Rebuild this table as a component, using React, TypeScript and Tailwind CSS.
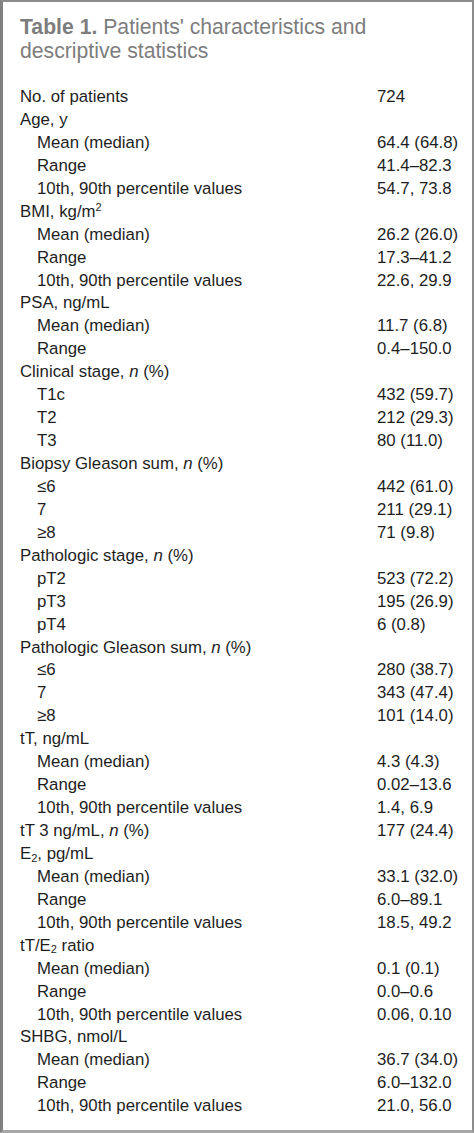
import React from 'react';

type Row = { label: React.ReactNode; value?: string; sub?: boolean };

const n = <i>n</i>;

const rows: Row[] = [
  { label: 'No. of patients', value: '724' },
  { label: 'Age, y' },
  { label: 'Mean (median)', value: '64.4 (64.8)', sub: true },
  { label: 'Range', value: '41.4–82.3', sub: true },
  { label: '10th, 90th percentile values', value: '54.7, 73.8', sub: true },
  { label: <>BMI, kg/m<sup className="text-[11px]">2</sup></> },
  { label: 'Mean (median)', value: '26.2 (26.0)', sub: true },
  { label: 'Range', value: '17.3–41.2', sub: true },
  { label: '10th, 90th percentile values', value: '22.6, 29.9', sub: true },
  { label: 'PSA, ng/mL' },
  { label: 'Mean (median)', value: '11.7 (6.8)', sub: true },
  { label: 'Range', value: '0.4–150.0', sub: true },
  { label: <>Clinical stage, {n} (%)</> },
  { label: 'T1c', value: '432 (59.7)', sub: true },
  { label: 'T2', value: '212 (29.3)', sub: true },
  { label: 'T3', value: '80 (11.0)', sub: true },
  { label: <>Biopsy Gleason sum, {n} (%)</> },
  { label: '≤6', value: '442 (61.0)', sub: true },
  { label: '7', value: '211 (29.1)', sub: true },
  { label: '≥8', value: '71 (9.8)', sub: true },
  { label: <>Pathologic stage, {n} (%)</> },
  { label: 'pT2', value: '523 (72.2)', sub: true },
  { label: 'pT3', value: '195 (26.9)', sub: true },
  { label: 'pT4', value: '6 (0.8)', sub: true },
  { label: <>Pathologic Gleason sum, {n} (%)</> },
  { label: '≤6', value: '280 (38.7)', sub: true },
  { label: '7', value: '343 (47.4)', sub: true },
  { label: '≥8', value: '101 (14.0)', sub: true },
  { label: 'tT, ng/mL' },
  { label: 'Mean (median)', value: '4.3 (4.3)', sub: true },
  { label: 'Range', value: '0.02–13.6', sub: true },
  { label: '10th, 90th percentile values', value: '1.4, 6.9', sub: true },
  { label: <>tT 3 ng/mL, {n} (%)</>, value: '177 (24.4)' },
  { label: <>E<sub className="text-[11px]">2</sub>, pg/mL</> },
  { label: 'Mean (median)', value: '33.1 (32.0)', sub: true },
  { label: 'Range', value: '6.0–89.1', sub: true },
  { label: '10th, 90th percentile values', value: '18.5, 49.2', sub: true },
  { label: <>tT/E<sub className="text-[11px]">2</sub> ratio</> },
  { label: 'Mean (median)', value: '0.1 (0.1)', sub: true },
  { label: 'Range', value: '0.0–0.6', sub: true },
  { label: '10th, 90th percentile values', value: '0.06, 0.10', sub: true },
  { label: 'SHBG, nmol/L' },
  { label: 'Mean (median)', value: '36.7 (34.0)', sub: true },
  { label: 'Range', value: '6.0–132.0', sub: true },
  { label: '10th, 90th percentile values', value: '21.0, 56.0', sub: true },
];

export default function App() {
  return (
    <div
      className="w-[474px] h-[1133px] bg-white border-t-2 border-r-2 border-l-[3px] border-b-[3px] border-t-[#8c8c8c] border-l-[#808080] border-r-[#8c8c8c] border-b-[#a8a8a8] pl-[17px] pt-[13px] text-[#1e1e1e]"
      style={{ fontFamily: '"Liberation Sans", Arial, sans-serif' }}
    >
      <h1 className="text-[21.2px] leading-[24px] text-[#7d7d7d] font-normal">
        <span className="font-bold">Table 1.</span> Patients' characteristics and
        <br />
        descriptive statistics
      </h1>
      <div className="mt-[23px] text-[16.8px] leading-[22.95px]">
        {rows.map((r, i) => (
          <div key={i} className="grid grid-cols-[357px_1fr] h-[22.95px]">
            <div className={r.sub ? 'pl-[17px]' : ''}>{r.label}</div>
            <div>{r.value}</div>
          </div>
        ))}
      </div>
    </div>
  );
}
